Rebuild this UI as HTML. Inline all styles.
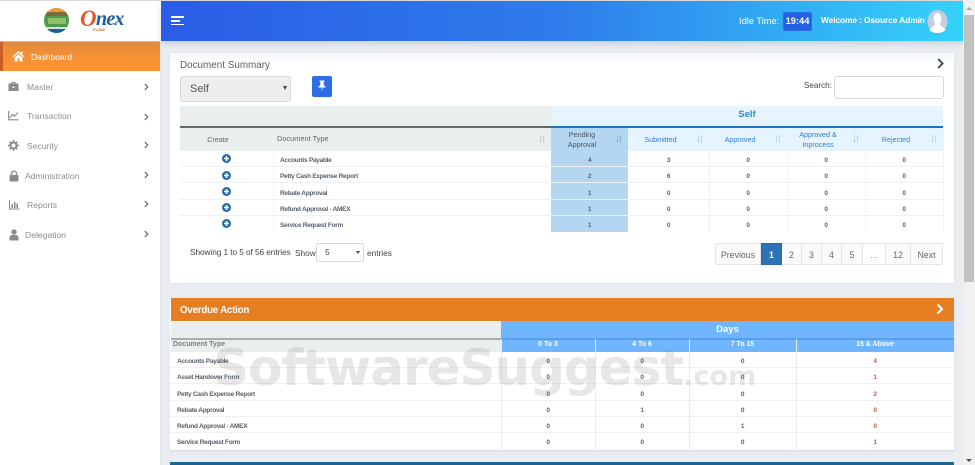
<!DOCTYPE html>
<html><head><meta charset="utf-8"><style>
*{box-sizing:border-box}
html,body{margin:0;padding:0;width:975px;height:465px;overflow:hidden;background:#e9edf2;font-family:"Liberation Sans",sans-serif;color:#555}
.a{position:absolute}
.ni{position:absolute;left:0;width:160px;height:20px;line-height:20px;font-size:8.600px;color:#8d8d8d}
.ni span{position:absolute;top:0}
.ni svg{position:absolute;left:8px;top:4px}
.ni .c{position:absolute;left:143px;top:5px}
.c0{position:absolute;white-space:nowrap;text-align:center}
.row{position:absolute;height:16px;font-size:6.500px;font-weight:bold;line-height:19px;letter-spacing:-.28px;color:#5a616b;border-bottom:1px solid #eef1f6}
.row div{position:absolute;top:0;height:15px;text-align:center}
.hd{position:absolute;text-align:center;font-size:7.200px;line-height:9.500px;display:flex;align-items:center;justify-content:center}
.pg{position:absolute;top:243px;height:22px;line-height:22px;text-align:center;font-size:8.800px;color:#666;background:#fafafa;border:1px solid #e3e5e8;border-left:0}
.srt{position:absolute;top:135px}
</style></head><body>

<!-- top bar -->
<div class="a" style="left:0;top:0;width:975px;height:1px;background:#d9dbde"></div>
<div class="a" style="left:0;top:1px;width:161px;height:40px;background:#fff"></div>
<div class="a" style="left:161px;top:1px;width:802px;height:40px;background:linear-gradient(90deg,#2b5ce6 0%,#2e7ceb 50%,#35d2fa 100%);box-shadow:0 3px 6px rgba(0,0,0,.12)"></div>

<!-- logo -->
<svg class="a" style="left:43px;top:7px" width="28" height="27" viewBox="0 0 28 27">
<defs><clipPath id="g"><circle cx="13.500" cy="13.500" r="12.500"/></clipPath></defs>
<g clip-path="url(#g)">
<rect width="28" height="27" fill="#4c9a4a"/>
<rect width="28" height="6" fill="#e89a3c"/>
<rect y="5" width="28" height="4" fill="#7d6a3a"/>
<path d="M5 11h18v6H5z" fill="#8cc06a"/>
<rect y="20" width="28" height="3" fill="#cde4ee"/>
<rect y="22" width="28" height="5" fill="#1f5f96"/>
</g></svg>
<div class="a" style="left:80px;top:6px;font:italic bold 23px/26px 'Liberation Serif',serif;color:#e8562a">O</div>
<div class="a" style="left:96px;top:8px;font:italic bold 20px/22px 'Liberation Serif',serif;color:#1d5f9e;letter-spacing:-.8px">nex</div>
<div class="a" style="left:93px;top:27px;font:bold 4px/5px 'Liberation Sans',sans-serif;color:#d9642c">FLOW</div>

<!-- hamburger -->
<div class="a" style="left:171px;top:16px;width:13px;height:1.500px;background:#fff"></div>
<div class="a" style="left:171px;top:20px;width:9px;height:1.500px;background:#fff"></div>
<div class="a" style="left:171px;top:23.500px;width:13px;height:1.500px;background:#fff"></div>

<!-- header right -->
<div class="a" style="left:739px;top:15px;font-size:9.300px;line-height:12px;color:#fff">Idle Time:</div>
<div class="a" style="left:783px;top:12px;width:29px;height:19px;background:#2560e0;border:1px solid #2a6fe8;border-radius:2px;color:#fff;font-size:9.300px;font-weight:bold;line-height:17px;text-align:center">19:44</div>
<div class="a" style="left:821px;top:14px;font-size:8.400px;font-weight:bold;line-height:12px;color:#fff;white-space:nowrap;letter-spacing:-.1px">Welcome : Osource Admin</div>
<svg class="a" style="left:927px;top:10px" width="21" height="23" viewBox="0 0 21 23">
<ellipse cx="10.500" cy="11.500" rx="10" ry="11.500" fill="#c6cede"/>
<ellipse cx="10.500" cy="9" rx="4" ry="6" fill="#fff"/>
<path d="M2.500 20c1.500-3 5-3.500 5.500-6h5c.5 2.500 4 3 5.500 6-2 2-5 3-8 3s-6-1-8-3z" fill="#fff"/>
</svg>

<!-- sidebar -->
<div class="a" style="left:0;top:41px;width:161px;height:424px;background:#fff;border-right:1px solid #e2e5ea"></div>
<div class="a" style="left:0;top:41px;width:160px;height:30px;background:linear-gradient(180deg,#dd8b41 0%,#f28f35 40%,#ff9533 100%);border-top:1px solid #d9b48f"></div>
<div class="a" style="left:0;top:42px;width:3px;height:29px;background:#c9602a"></div>
<svg class="a" style="left:12px;top:50px" width="13" height="12" viewBox="0 0 13 12"><path d="M6.500 1L0.500 6.500l.8.8L6.500 3l5.200 4.300.8-.8-2-1.800V1.500H9v1.500zM2.500 7.500V11.500h3V8.500h2v3h3V7.500l-4-3.300z" fill="#fff"/></svg>
<div class="a" style="left:31px;top:51px;font-size:8.400px;line-height:12px;color:#fff">Dashboard</div>

<div class="ni" style="top:77px"><svg width="11" height="11" viewBox="0 0 11 11"><path d="M3.500 2.500V1h4v1.500H10.500v7.500H.5V2.500zM4.500 2.500h2V2h-2zM4.500 5.500v1.500h2V5.500z" fill="#8a8a8a"/></svg><span style="left:27px">Master</span><svg class="c" style="left:144px;top:6px" width="5" height="8" viewBox="0 0 6 8"><path d="M1 .5L4.500 4 1 7.500" fill="none" stroke="#666" stroke-width="1.400"/></svg></div>
<div class="ni" style="top:106px"><svg width="11" height="11" viewBox="0 0 11 11"><path d="M.7 1v8.800h9.800" fill="none" stroke="#8a8a8a" stroke-width="1.200"/><path d="M2 7.500l2.500-3 2 1.500 3.500-3.500" fill="none" stroke="#8a8a8a" stroke-width="1.200"/></svg><span style="left:27px">Transaction</span><svg class="c" style="left:144px;top:7px" width="5" height="8" viewBox="0 0 6 8"><path d="M1 .5L4.500 4 1 7.500" fill="none" stroke="#666" stroke-width="1.400"/></svg></div>
<div class="ni" style="top:136px"><svg width="11" height="11" viewBox="0 0 11 11"><circle cx="5.500" cy="5.500" r="3" fill="none" stroke="#8a8a8a" stroke-width="2"/><path d="M5.500 0v2M5.500 9v2M0 5.500h2M9 5.500h2M1.600 1.600l1.400 1.400M8 8l1.400 1.400M1.600 9.400L3 8M8 3l1.400-1.400" stroke="#8a8a8a" stroke-width="1.500"/></svg><span style="left:27px">Security</span><svg class="c" style="left:144px;top:5px" width="5" height="8" viewBox="0 0 6 8"><path d="M1 .5L4.500 4 1 7.500" fill="none" stroke="#666" stroke-width="1.400"/></svg></div>
<div class="ni" style="top:166px"><svg style="left:9px;top:4px" width="10" height="12" viewBox="0 0 10 12"><rect x=".5" y="5" width="9" height="6.500" rx="1" fill="#8a8a8a"/><path d="M2.500 5.500V3.500a2.500 2.500 0 015 0V5.500" fill="none" stroke="#8a8a8a" stroke-width="1.300"/></svg><span style="left:25px">Administration</span><svg class="c" style="left:144px;top:5px" width="5" height="8" viewBox="0 0 6 8"><path d="M1 .5L4.500 4 1 7.500" fill="none" stroke="#666" stroke-width="1.400"/></svg></div>
<div class="ni" style="top:195px"><svg style="left:9px;top:4px" width="11" height="11" viewBox="0 0 11 11"><path d="M.5 1v9h10" fill="none" stroke="#8a8a8a" stroke-width="1"/><path d="M2.500 5h1.500v4H2.500zM5 3h1.500v6H5zM7.500 4.500H9V9H7.500z" fill="#8a8a8a"/></svg><span style="left:27px">Reports</span><svg class="c" style="left:144px;top:5px" width="5" height="8" viewBox="0 0 6 8"><path d="M1 .5L4.500 4 1 7.500" fill="none" stroke="#666" stroke-width="1.400"/></svg></div>
<div class="ni" style="top:225px"><svg style="left:9px;top:4px" width="10" height="12" viewBox="0 0 10 12"><circle cx="5" cy="3" r="2.700" fill="#8a8a8a"/><path d="M.5 11.500V8.500c0-1.500 1.500-2.500 3-2.500h3c1.500 0 3 1 3 2.500v3z" fill="#8a8a8a"/></svg><span style="left:25px">Delegation</span><svg class="c" style="left:144px;top:5px" width="5" height="8" viewBox="0 0 6 8"><path d="M1 .5L4.500 4 1 7.500" fill="none" stroke="#666" stroke-width="1.400"/></svg></div>

<!-- document summary card -->
<div class="a" style="left:170px;top:53px;width:784px;height:230px;background:#fff;box-shadow:0 0 2px rgba(0,0,0,.06)"></div>
<div class="a" style="left:170px;top:53px;width:784px;height:12px;background:linear-gradient(#f5f7f9,#fff)"></div>
<div class="a" style="left:180px;top:59px;font-size:9.900px;line-height:13px;color:#5a5f66;white-space:nowrap">Document Summary</div>
<svg class="a" style="left:937px;top:58px" width="7" height="11" viewBox="0 0 7 11"><path d="M1.200 1L5.500 5.500 1.200 10" fill="none" stroke="#3e4650" stroke-width="1.900"/></svg>
<div class="a" style="left:180px;top:76px;width:111px;height:26px;background:#eeeeee;border:1px solid #d5d9de;border-radius:3px;font-size:11px;line-height:24px;padding-left:9px;color:#555">Self</div>
<div class="a" style="left:283px;top:86px;width:0;height:0;border-left:2.500px solid transparent;border-right:2.500px solid transparent;border-top:4.500px solid #444"></div>
<div class="a" style="left:312px;top:76px;width:20px;height:21px;background:#2f6de8;border-radius:2px"></div>
<svg class="a" style="left:317px;top:80px" width="10" height="12" viewBox="0 0 10 12"><path d="M2.500 .5h5v1l-.8.500v3l1.800 1.500v1H5.500L5 11.500 4.500 7.500H1.500v-1L3.300 5V2l-.8-.5z" fill="#fff"/></svg>
<div class="a" style="left:804px;top:80px;font-size:8.100px;line-height:12px;color:#444">Search:</div>
<div class="a" style="left:834px;top:76px;width:110px;height:23px;background:#fff;border:1px solid #d5d9e2;border-radius:3px"></div>

<!-- doc table head -->
<div class="a" style="left:180px;top:106px;width:371px;height:20px;background:#ebeeef"></div>
<div class="a" style="left:551px;top:106px;width:392px;height:20px;background:#e5f4fe"></div>
<div class="a" style="left:551px;top:109px;width:392px;height:12px;text-align:center;font-size:9.500px;font-weight:bold;line-height:12px;color:#3a85cf">Self</div>
<div class="a" style="left:180px;top:126px;width:371px;height:1.500px;background:#5e6b68"></div>
<div class="a" style="left:551px;top:126px;width:392px;height:1.500px;background:#1f72bd"></div>
<div class="a" style="left:180px;top:128px;width:371px;height:23px;background:#ebeeef"></div>
<div class="a" style="left:273px;top:128px;width:1px;height:104px;background:#f1f3f6"></div>
<div class="a" style="left:551px;top:128px;width:77px;height:23px;background:#b5d6f0"></div>
<div class="a" style="left:628px;top:128px;width:315px;height:23px;background:#e5f4fe"></div>
<div class="hd" style="left:180px;top:128px;width:76px;height:23px;color:#666">Create</div>
<div class="a" style="left:277px;top:134px;font-size:7.400px;line-height:10px;color:#666">Document Type</div>
<div class="hd" style="left:551px;top:128px;width:62px;height:23px;color:#4c5562">Pending<br>Approval</div>
<div class="hd" style="left:628px;top:128px;width:65px;height:23px;color:#2f7ecb">Submitted</div>
<div class="hd" style="left:709px;top:128px;width:62px;height:23px;color:#2f7ecb">Approved</div>
<div class="hd" style="left:787px;top:128px;width:62px;height:23px;color:#2f7ecb">Approved &amp;<br>Inprocess</div>
<div class="hd" style="left:865px;top:128px;width:62px;height:23px;color:#2f7ecb">Rejected</div>
<svg class="srt" style="left:539px" width="6" height="8" viewBox="0 0 6 8"><path d="M1.500 0v7M.3 5.500l1.200 1.500 1.200-1.500M4.500 8V1M3.300 2.500L4.500 1l1.200 1.500" fill="none" stroke="#ccd0d3" stroke-width="1"/></svg>
<svg class="srt" style="left:616px" width="6" height="8" viewBox="0 0 6 8"><path d="M1.500 0v7M.3 5.500l1.200 1.500 1.200-1.500M4.500 8V1M3.300 2.500L4.500 1l1.200 1.500" fill="none" stroke="#93b5d2" stroke-width="1"/></svg>
<svg class="srt" style="left:697px" width="6" height="8" viewBox="0 0 6 8"><path d="M1.500 0v7M.3 5.500l1.200 1.500 1.200-1.500M4.500 8V1M3.300 2.500L4.500 1l1.200 1.500" fill="none" stroke="#bcdcf2" stroke-width="1"/></svg>
<svg class="srt" style="left:775px" width="6" height="8" viewBox="0 0 6 8"><path d="M1.500 0v7M.3 5.500l1.200 1.500 1.200-1.500M4.500 8V1M3.300 2.500L4.500 1l1.200 1.500" fill="none" stroke="#bcdcf2" stroke-width="1"/></svg>
<svg class="srt" style="left:853px" width="6" height="8" viewBox="0 0 6 8"><path d="M1.500 0v7M.3 5.500l1.200 1.500 1.200-1.500M4.500 8V1M3.300 2.500L4.500 1l1.200 1.500" fill="none" stroke="#bcdcf2" stroke-width="1"/></svg>
<svg class="srt" style="left:931px" width="6" height="8" viewBox="0 0 6 8"><path d="M1.500 0v7M.3 5.500l1.200 1.500 1.200-1.500M4.500 8V1M3.300 2.500L4.500 1l1.200 1.500" fill="none" stroke="#bcdcf2" stroke-width="1"/></svg>

<!-- doc table body -->
<div class="a" style="left:551px;top:151px;width:77px;height:81px;background:#b5d6f0"></div>
<div class="row" style="left:180px;top:151px;width:763px"><div style="left:100px;text-align:left;white-space:nowrap">Accounts Payable</div><div style="left:371px;width:77px">4</div><div style="left:448px;width:81px">3</div><div style="left:529px;width:78px">0</div><div style="left:607px;width:78px">0</div><div style="left:685px;width:78px">0</div></div>
<div class="row" style="left:180px;top:167px;width:763px"><div style="left:100px;text-align:left;white-space:nowrap">Petty Cash Expense Report</div><div style="left:371px;width:77px">2</div><div style="left:448px;width:81px">6</div><div style="left:529px;width:78px">0</div><div style="left:607px;width:78px">0</div><div style="left:685px;width:78px">0</div></div>
<div class="row" style="left:180px;top:183.500px;width:763px"><div style="left:100px;text-align:left;white-space:nowrap">Rebate Approval</div><div style="left:371px;width:77px">1</div><div style="left:448px;width:81px">0</div><div style="left:529px;width:78px">0</div><div style="left:607px;width:78px">0</div><div style="left:685px;width:78px">0</div></div>
<div class="row" style="left:180px;top:199.500px;width:763px"><div style="left:100px;text-align:left;white-space:nowrap">Refund Approval - AMEX</div><div style="left:371px;width:77px">1</div><div style="left:448px;width:81px">0</div><div style="left:529px;width:78px">0</div><div style="left:607px;width:78px">0</div><div style="left:685px;width:78px">0</div></div>
<div class="row" style="left:180px;top:216px;width:763px;border:0"><div style="left:100px;text-align:left;white-space:nowrap">Service Request Form</div><div style="left:371px;width:77px">1</div><div style="left:448px;width:81px">0</div><div style="left:529px;width:78px">0</div><div style="left:607px;width:78px">0</div><div style="left:685px;width:78px">0</div></div>
<div class="a" style="left:709px;top:128px;width:1px;height:104px;background:#f0f2f6"></div>
<div class="a" style="left:787px;top:128px;width:1px;height:104px;background:#f0f2f6"></div>
<div class="a" style="left:865px;top:128px;width:1px;height:104px;background:#f0f2f6"></div>
<div class="a" style="left:943px;top:128px;width:1px;height:104px;background:#f0f2f6"></div>

<!-- plus icons -->
<svg class="a" style="left:222px;top:154px" width="9" height="9" viewBox="0 0 9 9"><circle cx="4.500" cy="4.500" r="4.500" fill="#1f6bb5"/><path d="M4.500 2v5M2 4.500h5" stroke="#fff" stroke-width="1.500"/></svg>
<svg class="a" style="left:222px;top:170.500px" width="9" height="9" viewBox="0 0 9 9"><circle cx="4.500" cy="4.500" r="4.500" fill="#1f6bb5"/><path d="M4.500 2v5M2 4.500h5" stroke="#fff" stroke-width="1.500"/></svg>
<svg class="a" style="left:222px;top:186.500px" width="9" height="9" viewBox="0 0 9 9"><circle cx="4.500" cy="4.500" r="4.500" fill="#1f6bb5"/><path d="M4.500 2v5M2 4.500h5" stroke="#fff" stroke-width="1.500"/></svg>
<svg class="a" style="left:222px;top:203px" width="9" height="9" viewBox="0 0 9 9"><circle cx="4.500" cy="4.500" r="4.500" fill="#1f6bb5"/><path d="M4.500 2v5M2 4.500h5" stroke="#fff" stroke-width="1.500"/></svg>
<svg class="a" style="left:222px;top:219px" width="9" height="9" viewBox="0 0 9 9"><circle cx="4.500" cy="4.500" r="4.500" fill="#1f6bb5"/><path d="M4.500 2v5M2 4.500h5" stroke="#fff" stroke-width="1.500"/></svg>

<!-- footer controls -->
<div class="a" style="left:190px;top:246px;font-size:8.300px;line-height:12px;color:#444;white-space:nowrap;letter-spacing:-.08px">Showing 1 to 5 of 56 entries</div>
<div class="a" style="left:295px;top:247px;font-size:8.300px;line-height:12px;color:#444">Show</div>
<div class="a" style="left:316px;top:243px;width:48px;height:19px;background:#fff;border:1px solid #d5d9de;border-radius:2px;font-size:8.600px;line-height:17px;padding-left:8px;color:#444">5</div>
<div class="a" style="left:356px;top:251px;width:0;height:0;border-left:2.500px solid transparent;border-right:2.500px solid transparent;border-top:3.500px solid #444"></div>
<div class="a" style="left:367px;top:247px;font-size:8.300px;line-height:12px;color:#444">entries</div>

<div class="pg" style="left:715px;width:46px;border-left:1px solid #e3e5e8;border-radius:2px 0 0 2px">Previous</div>
<div class="pg" style="left:761px;width:21px;background:#2d72b4;border:1px solid #2a6aa8;color:#fff;font-weight:bold">1</div>
<div class="pg" style="left:782px;width:20px">2</div>
<div class="pg" style="left:802px;width:20px">3</div>
<div class="pg" style="left:822px;width:20px">4</div>
<div class="pg" style="left:842px;width:21px">5</div>
<div class="pg" style="left:863px;width:23px;background:#fff;color:#999">...</div>
<div class="pg" style="left:886px;width:25px">12</div>
<div class="pg" style="left:911px;width:32px;border-radius:0 2px 2px 0">Next</div>

<!-- overdue -->
<div class="a" style="left:170px;top:298px;width:784px;height:152px;background:#fff;box-shadow:0 1px 1px rgba(0,0,0,.08)"></div>
<div class="a" style="left:171px;top:298px;width:783px;height:23px;background:#e67e22"></div>
<div class="a" style="left:180px;top:304px;font-size:9.800px;font-weight:bold;line-height:13px;letter-spacing:-.25px;color:#fff;white-space:nowrap">Overdue Action</div>
<svg class="a" style="left:936px;top:303px" width="8" height="12" viewBox="0 0 8 12"><path d="M1.500 1.500L6 6 1.500 10.500" fill="none" stroke="#fff" stroke-width="2"/></svg>

<div class="a" style="left:171px;top:322px;width:330px;height:16px;background:#ebeeef"></div>
<div class="a" style="left:501px;top:321px;width:453px;height:17px;background:#70b5ff"></div>
<div class="a" style="left:501px;top:324px;width:453px;text-align:center;font-size:9.500px;font-weight:bold;line-height:12px;color:#fff">Days</div>
<div class="a" style="left:171px;top:338px;width:330px;height:1.500px;background:#a9adad"></div>
<div class="a" style="left:501px;top:338px;width:453px;height:1.500px;background:#5a9fe6"></div>
<div class="a" style="left:171px;top:339.500px;width:330px;height:12px;background:#ebeeef"></div>
<div class="a" style="left:501px;top:339.500px;width:453px;height:12px;background:#70b5ff"></div>
<div class="a" style="left:173px;top:340px;font-size:7px;font-weight:bold;line-height:10px;color:#7a7f84">Document Type</div>
<div class="c0" style="left:501px;top:340px;width:94px;font-size:7px;font-weight:bold;line-height:10px;color:#fff">0 To 3</div>
<div class="c0" style="left:595px;top:340px;width:94px;font-size:7px;font-weight:bold;line-height:10px;color:#fff">4 To 6</div>
<div class="c0" style="left:689px;top:340px;width:107px;font-size:7px;font-weight:bold;line-height:10px;color:#fff">7 To 15</div>
<div class="c0" style="left:796px;top:340px;width:158px;font-size:7px;font-weight:bold;line-height:10px;color:#fff">15 &amp; Above</div>

<div class="row" style="left:171px;top:352px;width:783px"><div style="left:6px;white-space:nowrap">Accounts Payable</div><div style="left:330px;width:94px">0</div><div style="left:424px;width:94px">0</div><div style="left:518px;width:107px">0</div><div style="left:625px;width:158px;color:#d9542b">4</div></div>
<div class="row" style="left:171px;top:368.300px;width:783px"><div style="left:6px;white-space:nowrap">Asset Handover Form</div><div style="left:330px;width:94px">0</div><div style="left:424px;width:94px">0</div><div style="left:518px;width:107px">0</div><div style="left:625px;width:158px;color:#d9542b">1</div></div>
<div class="row" style="left:171px;top:384.500px;width:783px"><div style="left:6px;white-space:nowrap">Petty Cash Expense Report</div><div style="left:330px;width:94px">0</div><div style="left:424px;width:94px">0</div><div style="left:518px;width:107px">0</div><div style="left:625px;width:158px;color:#d9542b">2</div></div>
<div class="row" style="left:171px;top:400.700px;width:783px"><div style="left:6px;white-space:nowrap">Rebate Approval</div><div style="left:330px;width:94px">0</div><div style="left:424px;width:94px">1</div><div style="left:518px;width:107px">0</div><div style="left:625px;width:158px;color:#d9542b">0</div></div>
<div class="row" style="left:171px;top:416.900px;width:783px"><div style="left:6px;white-space:nowrap">Refund Approval - AMEX</div><div style="left:330px;width:94px">0</div><div style="left:424px;width:94px">0</div><div style="left:518px;width:107px">1</div><div style="left:625px;width:158px;color:#d9542b">0</div></div>
<div class="row" style="left:171px;top:433px;width:783px;border:0"><div style="left:6px;white-space:nowrap">Service Request Form</div><div style="left:330px;width:94px">0</div><div style="left:424px;width:94px">0</div><div style="left:518px;width:107px">0</div><div style="left:625px;width:158px;color:#d9542b">1</div></div>

<div class="a" style="left:501px;top:339px;width:1px;height:110px;background:#e6ebf2"></div>
<div class="a" style="left:595px;top:339px;width:1px;height:110px;background:#e6ebf2"></div>
<div class="a" style="left:689px;top:339px;width:1px;height:110px;background:#e6ebf2"></div>
<div class="a" style="left:796px;top:339px;width:1px;height:110px;background:#e6ebf2"></div>

<!-- bottom bar -->
<div class="a" style="left:170px;top:462px;width:784px;height:3px;background:#1f6390"></div>

<!-- watermark -->
<div class="a" style="left:213px;top:343px;font-family:'DejaVu Sans',sans-serif;font-size:50px;font-weight:bold;line-height:50px;color:rgba(110,115,120,.17);white-space:nowrap;letter-spacing:-1px">SoftwareSuggest<span style="font-size:27px;letter-spacing:0">.com</span></div>

<!-- scrollbar -->
<div class="a" style="left:963px;top:0;width:12px;height:465px;background:#f1f1f1"></div>
<div class="a" style="left:964px;top:15px;width:10px;height:267px;background:#c1c1c1"></div>
<div class="a" style="left:966px;top:7px;width:0;height:0;border-left:3px solid transparent;border-right:3px solid transparent;border-bottom:3px solid #a5a5a5"></div>
<div class="a" style="left:966px;top:459px;width:0;height:0;border-left:3px solid transparent;border-right:3px solid transparent;border-top:3px solid #505050"></div>
</body></html>
